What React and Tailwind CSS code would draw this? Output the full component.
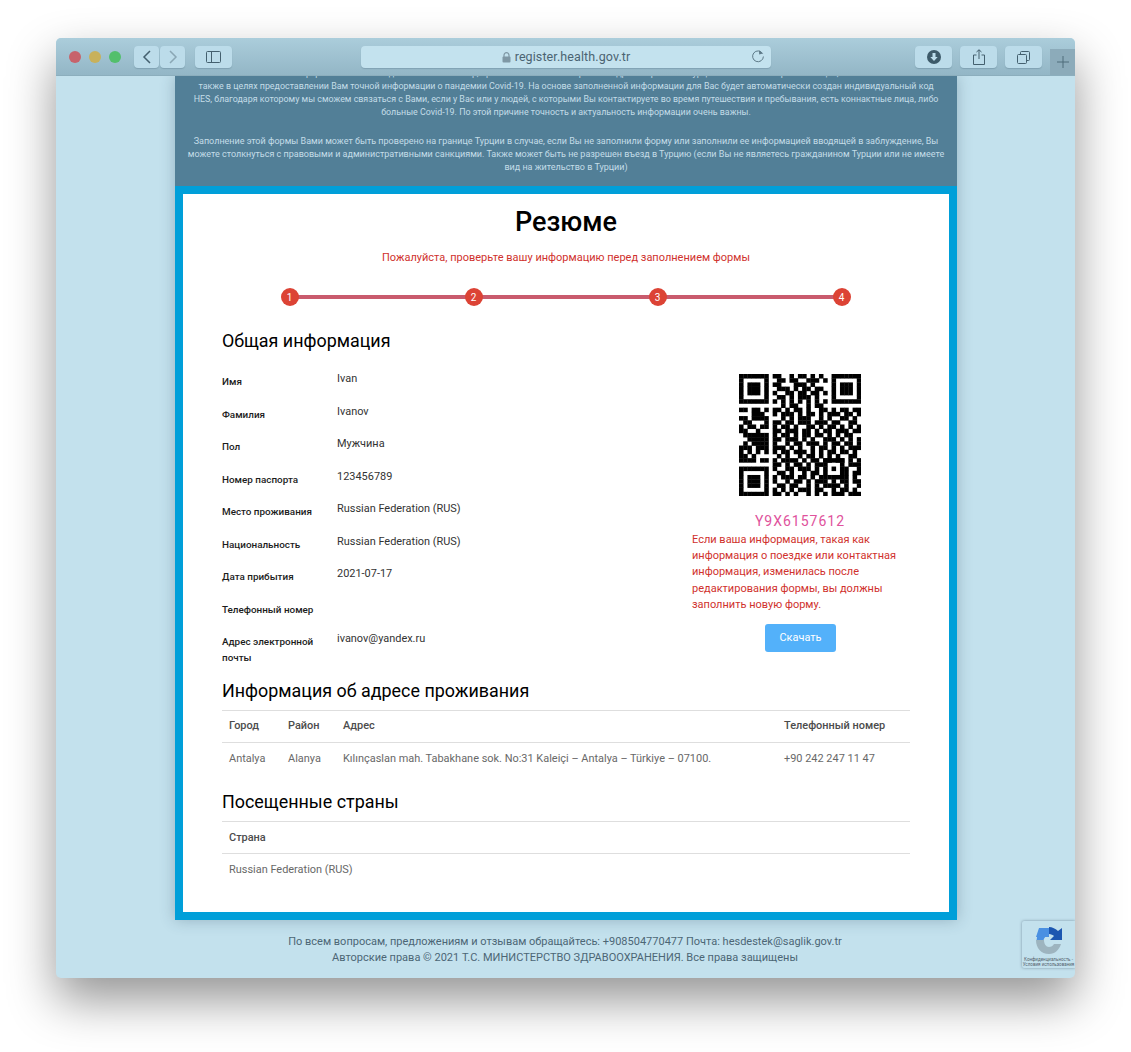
const topBand = [
  "##..#.##.#.#.",
  ".##.##..###.#",
  "##...###.#...",
  ".###.#.##.##.",
  "#..##.##.##.#",
  ".##.#.###.#..",
  "#.#.#.#.#.#.#",
  "..#.##..#.##.",
];

const midBand = [
  "##.##.#.##.#.##.#..##.#.##.##",
  "...###..#.###.#.##.#.###.##.#",
  "##.####...#.#.###..#.#..##.#.",
  ".##...#.##.##.###.###.##..##.",
  "#.##.##.#.##.#..##.#.##.#.#.#",
  "##..#...##.###.##.#.##.###.##",
  ".######.#.##.#.##.##.#.#.##..",
  "..#####.##.###.#.#..###.#.#.#",
  ".#.####.#..#.##.###.#.##.##.#",
  "###.###.###.#.#..#.##.#.#.###",
  "#.#.#.#.#.##.###.#.#.##.##.#.",
  "##.#.....#.#..#.##.#.#.#..##.",
  "####.##.#.####.#.##.##.##.#.#",
];

const lowBand = [
  "##.#.##.#.##.#..#.###",
  "#..##.###.#.#.#.##..#",
  ".##.#..#.##.#.##.#.##",
  "#.###.##.#.#.#.###.#.",
  "#..#.##.#.###.#.##.##",
  ".##.##..#.#.####.#..#",
  "#.#.#.###.##..#.##.#.",
  "##.#.#..#.#.#.###.###",
];

const qrCells = () => {
  const cells = [];
  const finder = (x, y) => {
    for (let j = 0; j < 7; j++) {
      for (let i = 0; i < 7; i++) {
        const ring = i === 0 || j === 0 || i === 6 || j === 6;
        const core = i >= 2 && i <= 4 && j >= 2 && j <= 4;
        if (ring || core) cells.push([x + i, y + j]);
      }
    }
  };
  finder(0, 0);
  finder(22, 0);
  finder(0, 22);
  topBand.forEach((row, j) => [...row].forEach((c, i) => c === "#" && cells.push([8 + i, j])));
  midBand.forEach((row, j) => [...row].forEach((c, i) => c === "#" && cells.push([i, 8 + j])));
  lowBand.forEach((row, j) =>
    [...row].forEach((c, i) => {
      const inAlign = 8 + i >= 20 && 8 + i <= 24 && j <= 3;
      if (c === "#" && !inAlign) cells.push([8 + i, 21 + j]);
    })
  );
  for (let j = 20; j <= 24; j++) {
    for (let i = 20; i <= 24; i++) {
      const on = i === 20 || i === 24 || j === 20 || j === 24 || (i === 22 && j === 22);
      if (on) cells.push([i, j]);
    }
  }
  return cells;
};

function QrCode() {
  return (
    <svg viewBox="0 0 29 29" className="w-[122px] h-[122px] blur-[0.4px]">
      {qrCells().map(([x, y]) => (
        <rect key={`${x}-${y}`} x={x} y={y} width="1.08" height="1.08" fill="#000" />
      ))}
    </svg>
  );
}

const fields = [
  ["Имя", "Ivan"],
  ["Фамилия", "Ivanov"],
  ["Пол", "Мужчина"],
  ["Номер паспорта", "123456789"],
  ["Место проживания", "Russian Federation (RUS)"],
  ["Национальность", "Russian Federation (RUS)"],
  ["Дата прибытия", "2021-07-17"],
  ["Телефонный номер", ""],
  ["Адрес электронной почты", "ivanov@yandex.ru"],
];

function ToolButton({ className, children }) {
  return (
    <div className={`h-[22px] rounded-[4px] bg-[#bcdcea] shadow-[0_1px_1px_rgba(60,90,110,0.25)] flex items-center justify-center ${className}`}>
      {children}
    </div>
  );
}

function Toolbar() {
  return (
    <div className="relative h-[38px] shrink-0 flex items-start pt-[8px] pl-[13px] bg-gradient-to-b from-[#abcddb] to-[#93b6c6] border-b border-[#8caebd]">
      <div className="flex gap-[8px] mt-[5px]">
        <div className="w-[12px] h-[12px] rounded-full bg-[#c7636b]" />
        <div className="w-[12px] h-[12px] rounded-full bg-[#c8b15b]" />
        <div className="w-[12px] h-[12px] rounded-full bg-[#53bf6c]" />
      </div>
      <div className="flex gap-[1px] ml-[13px]">
        <ToolButton className="w-[25px]">
          <svg width="10" height="14" viewBox="0 0 10 14" fill="none" stroke="#44606f" strokeWidth="1.5">
            <path d="M8 1 2 7l6 6" />
          </svg>
        </ToolButton>
        <ToolButton className="w-[25px]">
          <svg width="10" height="14" viewBox="0 0 10 14" fill="none" stroke="#8aa7b5" strokeWidth="1.5">
            <path d="m2 1 6 6-6 6" />
          </svg>
        </ToolButton>
      </div>
      <ToolButton className="w-[37px] ml-[10px]">
        <svg width="15" height="12" viewBox="0 0 15 12" fill="none" stroke="#44606f">
          <rect x="0.5" y="0.5" width="14" height="11" rx="1" />
          <path d="M5.5 0.5v11" />
        </svg>
      </ToolButton>
      <ToolButton className="w-[410px] ml-[129px] relative bg-[#c3e2ee]">
        <svg width="9" height="11" viewBox="0 0 9 11" className="mr-[4px]">
          <path d="M2 5V3.2a2.5 2.5 0 0 1 5 0V5" fill="none" stroke="#7f98a5" strokeWidth="1.2" />
          <rect x="0.5" y="4.5" width="8" height="6" rx="1" fill="#7f98a5" />
        </svg>
        <span className="text-[12.5px] text-[#4b6472] tracking-[0.1px]">register.health.gov.tr</span>
        <svg width="14" height="14" viewBox="0 0 14 14" fill="none" stroke="#5e7a88" strokeWidth="1" className="absolute right-[6px] top-[3px]">
          <path d="M11.6 4.5A5.4 5.4 0 1 0 12.4 7.5" />
          <path d="M8 1.2 11.8 4.6 8.2 5.6" fill="#5e7a88" stroke="none" />
        </svg>
      </ToolButton>
      <ToolButton className="w-[37px] ml-[144px]">
        <svg width="14" height="14" viewBox="0 0 14 14">
          <circle cx="7" cy="7" r="7" fill="#3d5a69" />
          <path d="M5.5 3h3v4h2.2L7 11 3.3 7h2.2z" fill="#bcdcea" />
        </svg>
      </ToolButton>
      <ToolButton className="w-[37px] ml-[8px]">
        <svg width="12" height="16" viewBox="0 0 12 16" fill="none" stroke="#44606f">
          <path d="M3.5 6H.5v9.5h11V6h-3M6 10V.8M3.5 3 6 .8 8.500 3" />
        </svg>
      </ToolButton>
      <ToolButton className="w-[37px] ml-[8px]">
        <svg width="13" height="13" viewBox="0 0 13 13" fill="none" stroke="#44606f">
          <rect x="0.5" y="3.500" width="9" height="9" rx="1" />
          <path d="M3.500 3.500V1.500a1 1 0 0 1 1-1h7a1 1 0 0 1 1 1v7a1 1 0 0 1-1 1h-2" />
        </svg>
      </ToolButton>
      <div className="absolute right-0 bottom-0 w-[25px] h-[26px] bg-[#8cabba] flex items-center justify-center">
        <svg width="12" height="12" viewBox="0 0 12 12" stroke="#4f6c7b">
          <path d="M6 0v12M0 6h12" />
        </svg>
      </div>
    </div>
  );
}

function Steps() {
  return (
    <div className="relative ml-[97.5px] mr-[98.5px] mt-[22px] h-[18px] flex items-center justify-between">
      <div className="absolute left-[9px] right-[9px] top-[7px] h-[4px] bg-[#c95b6d]" />
      {[1, 2, 3, 4].map((n) => (
        <div key={n} className="relative w-[18px] h-[18px] rounded-full bg-[#dc4335] text-white text-[10px] flex items-center justify-center">
          {n}
        </div>
      ))}
    </div>
  );
}

function DataTable({ columns, rows }) {
  return (
    <table className="w-full border-collapse text-[10.95px] table-fixed">
      <thead>
        <tr className="border-y border-[#dedede]">
          {columns.map((col) => (
            <th key={col.label} style={{ width: col.width }} className="h-[32px] pl-[7px] pt-[1px] text-left font-medium text-[#4c4c4c]">
              {col.label}
            </th>
          ))}
        </tr>
      </thead>
      <tbody>
        {rows.map((row) => (
          <tr key={row[0]}>
            {row.map((cell) => (
              <td key={cell} className="h-[32px] pl-[7px] pt-[1px] text-[#686868] whitespace-nowrap">
                {cell}
              </td>
            ))}
          </tr>
        ))}
      </tbody>
    </table>
  );
}

export default function App() {
  return (
    <div className="w-[1131px] h-[1052px] pt-[38px] pl-[56px] bg-white overflow-hidden font-['Roboto',sans-serif]">
      <div className="relative w-[1019px] h-[940px] rounded-[5px] overflow-hidden flex flex-col bg-[#c3e1ed] shadow-[0_22px_48px_rgba(0,0,0,0.42)]">
        <Toolbar />
        <div className="flex-1 overflow-hidden">
          <div className="w-[782px] ml-[119px] shadow-[0_0_14px_rgba(40,70,90,0.3)]">
            <div className="h-[110px] overflow-hidden bg-[#527f97] text-center text-[8.9px] leading-[13px] text-[#c4dde8] whitespace-nowrap">
              <p className="-mt-[9px]">
                Эта форма заполняется для выполнения мер, принимаемых Министерством здравоохранения Турции в отношении прибывающих, а
                <br />
                также в целях предоставлении Вам точной информации о пандемии Covid-19. На основе заполненной информации для Вас будет автоматически создан индивидуальный код
                <br />
                HES, благодаря которому мы сможем связаться с Вами, если у Вас или у людей, с которыми Вы контактируете во время путешествия и пребывания, есть коннактные лица, либо
                <br />
                больные Covid-19. По этой причине точность и актуальность информации очень важны.
              </p>
              <p className="mt-[16px] text-[9px]">
                Заполнение этой формы Вами может быть проверено на границе Турции в случае, если Вы не заполнили форму или заполнили ее информацией вводящей в заблуждение, Вы
                <br />
                можете столкнуться с правовыми и административными санкциями. Также может быть не разрешен въезд в Турцию (если Вы не являетесь гражданином Турции или не имеете
                <br />
                вид на жительство в Турции)
              </p>
            </div>
            <div className="h-[734px] border-[8px] border-[#009fd9] bg-white">
              <h1 className="mt-[10px] text-center text-[27px] leading-[36px] font-medium text-black">Резюме</h1>
              <p className="mt-[10px] text-center text-[11px] leading-[16px] text-[#d0312d]">
                Пожалуйста, проверьте вашу информацию перед заполнением формы
              </p>
              <Steps />
              <div className="px-[39px]">
                <h2 className="mt-[23px] text-[17.9px] leading-[24px] text-black">Общая информация</h2>
                <div className="flex mt-[18px]">
                  <div className="w-[449px] shrink-0">
                    {fields.map(([label, value]) => (
                      <div key={label} className="flex min-h-[32.500px]">
                        <div className="w-[115px] shrink-0 pt-[3px] pr-[6px] text-[9.9px] leading-[15.500px] font-medium text-[#1c1c1c]">
                          {label}
                        </div>
                        <div className="text-[10.95px] leading-[16px] text-[#333]">{value}</div>
                      </div>
                    ))}
                  </div>
                  <div className="w-[216px] ml-[21px] pt-[3px] flex flex-col items-center">
                    <QrCode />
                    <div className="mt-[15px] text-[14px] leading-[20px] tracking-[1px] text-[#e0529c]">Y9X6157612</div>
                    <p className="w-full mt-[1px] text-[11px] leading-[16.200px] text-[#d0312d]">
                      Если ваша информация, такая как информация о поездке или контактная информация, изменилась после редактирования формы, вы должны заполнить новую форму.
                    </p>
                    <button className="mt-[11px] ml-[1px] w-[71px] h-[28px] rounded-[3px] bg-[#53b1fa] text-[10.95px] text-white">Скачать</button>
                  </div>
                </div>
                <h2 className="mt-[13.5px] text-[17.9px] leading-[24px] text-black">Информация об адресе проживания</h2>
                <div className="mt-[7px]">
                  <DataTable
                    columns={[
                      { label: "Город", width: 59 },
                      { label: "Район", width: 55 },
                      { label: "Адрес", width: 441 },
                      { label: "Телефонный номер", width: 133 },
                    ]}
                    rows={[["Antalya", "Alanya", "Kılınçaslan mah. Tabakhane sok. No:31 Kaleiçi – Antalya – Türkiye – 07100.", "+90 242 247 11 47"]]}
                  />
                </div>
                <h2 className="mt-[16px] text-[17.9px] leading-[24px] text-black">Посещенные страны</h2>
                <div className="mt-[7px]">
                  <DataTable columns={[{ label: "Страна", width: 688 }]} rows={[["Russian Federation (RUS)"]]} />
                </div>
              </div>
            </div>
          </div>
          <div className="w-[782px] ml-[118px] mt-[14px] text-center text-[11px] leading-[16px] text-[#4c6675]">
            <p>По всем вопросам, предложениям и отзывам обращайтесь: +908504770477 Почта: hesdestek@saglik.gov.tr</p>
            <p>Авторские права © 2021 T.C. МИНИСТЕРСТВО ЗДРАВООХРАНЕНИЯ. Все права защищены</p>
          </div>
        </div>
        <div className="absolute right-0 top-[883px] w-[53px] h-[47px] rounded-l-[2px] bg-[#c3e1ed] shadow-[0_0_3px_rgba(60,80,100,0.55)] flex flex-col items-center pt-[6px]">
          <svg width="28" height="28" viewBox="0 0 28 28" fill="none" className="blur-[0.3px]">
            <path d="M5 14a9 9 0 0 1 5-8" stroke="#4a90e2" strokeWidth="7" />
            <path d="M4 1h10v9H1z" fill="#4a90e2" />
            <path d="M14 0c3 0 7 2 9 4l4-3v12H15l4-4c-1-1-3-2-5-2z" fill="#1c56b0" />
            <path d="M1 13h8c0 4 2 7 5 7 2 0 4-1 5-3h7c-2 6-6 10-12 10C6 27 1 21 1 13z" fill="#9db4bf" />
          </svg>
          <div className="text-[4.500px] leading-[5px] text-center text-[#55646d] whitespace-nowrap mt-[2px]">
            Конфиденциальность -
            <br />
            Условия использования
          </div>
        </div>
      </div>
    </div>
  );
}
